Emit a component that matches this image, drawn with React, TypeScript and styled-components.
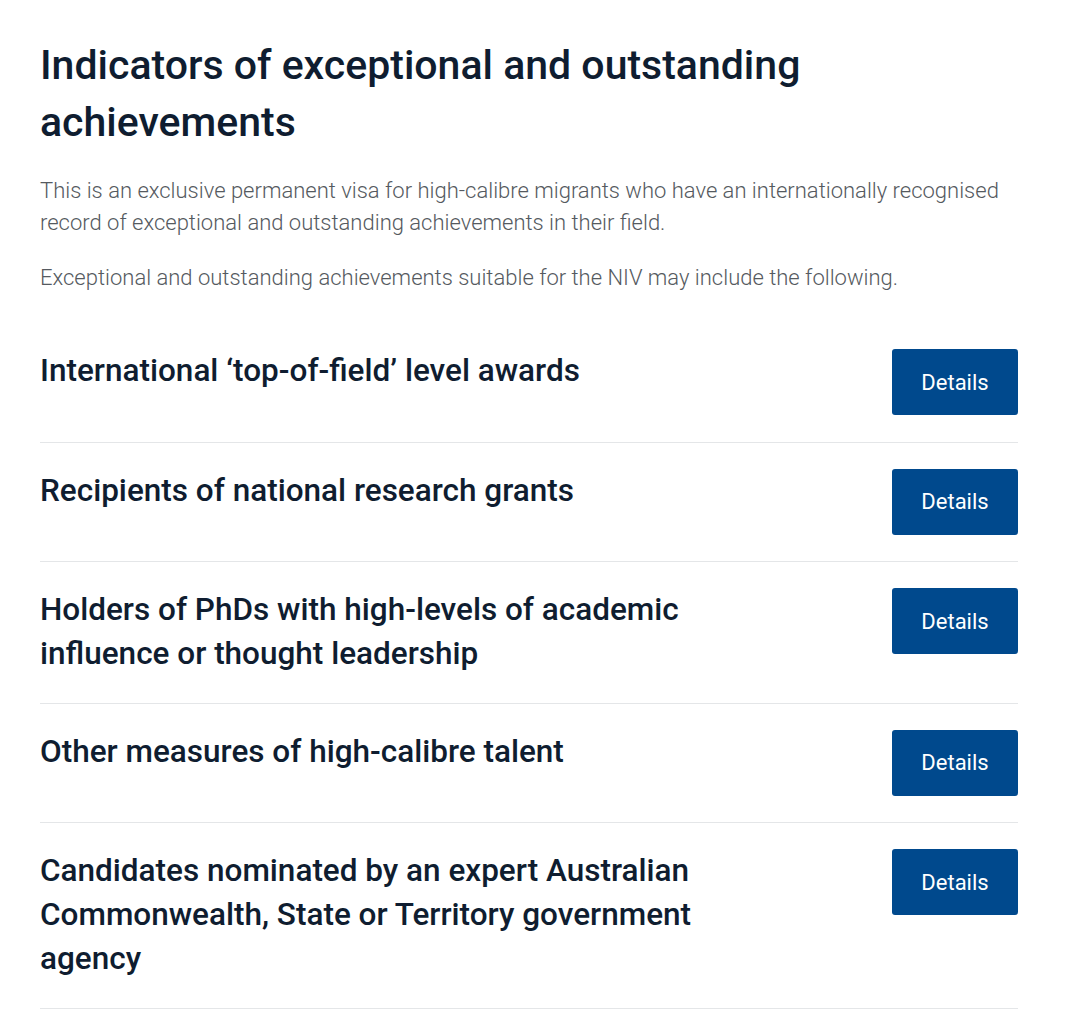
import React from 'react';
import styled, { createGlobalStyle } from 'styled-components';

const ITEMS = [
  "International \u2018top-of-field\u2019 level awards",
  'Recipients of national research grants',
  'Holders of PhDs with high-levels of academic influence or thought leadership',
  'Other measures of high-calibre talent',
  'Candidates nominated by an expert Australian Commonwealth, State or Territory government agency',
] as const;

const GlobalStyle = createGlobalStyle`
  body {
    margin: 0;
    background: #ffffff;
    font-family: Roboto, "Liberation Sans", sans-serif;
  }
`;

const Page = styled.main`
  padding: 37px 62px 0 40px;
`;

const Title = styled.h1`
  margin: 0 0 24px;
  font-size: 41px;
  font-weight: 500;
  line-height: 57px;
  color: #0f1d30;
  max-width: 820px;
`;

const Intro = styled.p`
  margin: 0 0 23px;
  font-size: 22px;
  font-weight: 300;
  line-height: 32px;
  color: #555a60;

  &:last-of-type {
    margin-bottom: 29px;
  }
`;

const List = styled.ul`
  list-style: none;
  margin: 0;
  padding: 0;
`;

const Row = styled.li`
  display: flex;
  justify-content: space-between;
  align-items: flex-start;
  padding: 26px 0 26.5px;
  border-bottom: 1px solid #e4e6e8;
`;

const ItemTitle = styled.h2`
  margin: 0;
  max-width: 700px;
  font-size: 31.5px;
  font-weight: 500;
  line-height: 44px;
  color: #0f1d30;
`;

const DetailsButton = styled.button`
  flex: none;
  width: 126px;
  height: 66px;
  border: none;
  border-radius: 3px;
  background: #00498d;
  color: #ffffff;
  font-family: Roboto, "Liberation Sans", sans-serif;
  font-size: 22px;
  font-weight: 400;
  cursor: pointer;
`;

const App: React.FC = () => (
  <>
    <GlobalStyle />
    <Page>
      <Title>Indicators of exceptional and outstanding achievements</Title>
      <Intro>
        This is an exclusive permanent visa for high-calibre migrants who have an
        internationally recognised record of exceptional and outstanding
        achievements in their field.
      </Intro>
      <Intro>
        Exceptional and outstanding achievements suitable for the NIV may include
        the following.
      </Intro>
      <List>
        {ITEMS.map((item) => (
          <Row key={item}>
            <ItemTitle>{item}</ItemTitle>
            <DetailsButton type="button">Details</DetailsButton>
          </Row>
        ))}
      </List>
    </Page>
  </>
);

export default App;
